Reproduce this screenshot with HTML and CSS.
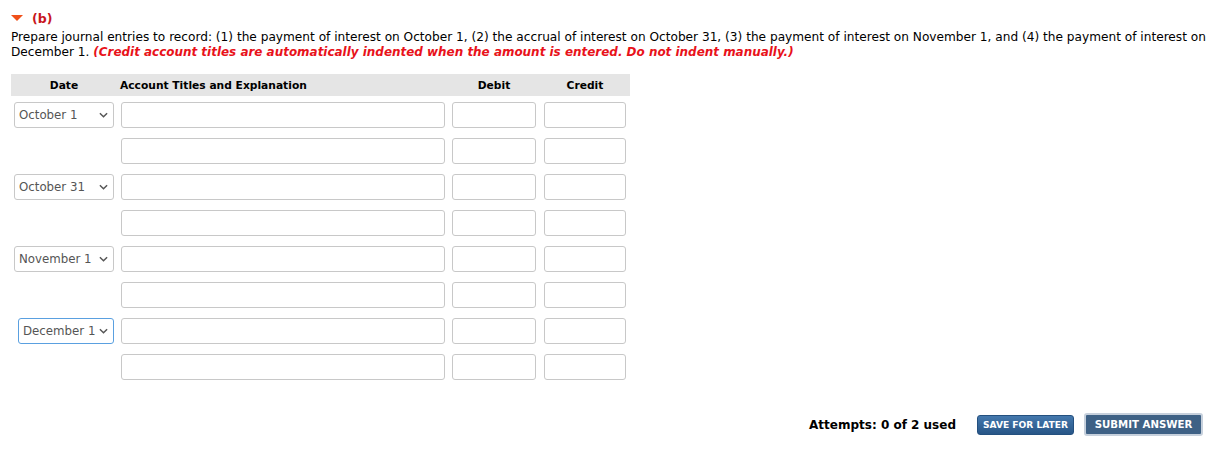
FILE: index.html
```html
<!DOCTYPE html>
<html>
<head>
<meta charset="utf-8">
<link rel="stylesheet" href="styles.css">
</head>
<body>
<div class="page">
  <div class="part">
    <span class="tri"></span>
    <span class="part-label">(b)</span>
  </div>
  <p class="prompt">Prepare journal entries to record: (1) the payment of interest on October 1, (2) the accrual of interest on October 31, (3) the payment of interest on November 1, and (4) the payment of interest on December 1. <em class="note">(Credit account titles are automatically indented when the amount is entered. Do not indent manually.)</em></p>

  <div class="journal">
    <div class="head">
      <div class="h-date">Date</div>
      <div class="h-acct">Account Titles and Explanation</div>
      <div class="h-num">Debit</div>
      <div class="h-num">Credit</div>
    </div>

    <div class="row">
      <div class="c-date"><div class="sel w100"><span>October 1</span><svg class="chev" viewBox="0 0 10 6"><path d="M1 1l4 4 4-4" fill="none" stroke="#555" stroke-width="1.6"/></svg></div></div>
      <div class="c-acct"><div class="inp"></div></div>
      <div class="c-num"><div class="inp"></div></div>
      <div class="c-num"><div class="inp"></div></div>
    </div>
    <div class="row">
      <div class="c-date"></div>
      <div class="c-acct"><div class="inp"></div></div>
      <div class="c-num"><div class="inp"></div></div>
      <div class="c-num"><div class="inp"></div></div>
    </div>

    <div class="row">
      <div class="c-date"><div class="sel w100"><span>October 31</span><svg class="chev" viewBox="0 0 10 6"><path d="M1 1l4 4 4-4" fill="none" stroke="#555" stroke-width="1.6"/></svg></div></div>
      <div class="c-acct"><div class="inp"></div></div>
      <div class="c-num"><div class="inp"></div></div>
      <div class="c-num"><div class="inp"></div></div>
    </div>
    <div class="row">
      <div class="c-date"></div>
      <div class="c-acct"><div class="inp"></div></div>
      <div class="c-num"><div class="inp"></div></div>
      <div class="c-num"><div class="inp"></div></div>
    </div>

    <div class="row">
      <div class="c-date"><div class="sel w100"><span>November 1</span><svg class="chev" viewBox="0 0 10 6"><path d="M1 1l4 4 4-4" fill="none" stroke="#555" stroke-width="1.6"/></svg></div></div>
      <div class="c-acct"><div class="inp"></div></div>
      <div class="c-num"><div class="inp"></div></div>
      <div class="c-num"><div class="inp"></div></div>
    </div>
    <div class="row">
      <div class="c-date"></div>
      <div class="c-acct"><div class="inp"></div></div>
      <div class="c-num"><div class="inp"></div></div>
      <div class="c-num"><div class="inp"></div></div>
    </div>

    <div class="row">
      <div class="c-date"><div class="sel w96 focus"><span>December 1</span><svg class="chev" viewBox="0 0 10 6"><path d="M1 1l4 4 4-4" fill="none" stroke="#555" stroke-width="1.6"/></svg></div></div>
      <div class="c-acct"><div class="inp"></div></div>
      <div class="c-num"><div class="inp"></div></div>
      <div class="c-num"><div class="inp"></div></div>
    </div>
    <div class="row">
      <div class="c-date"></div>
      <div class="c-acct"><div class="inp"></div></div>
      <div class="c-num"><div class="inp"></div></div>
      <div class="c-num"><div class="inp"></div></div>
    </div>
  </div>

  <div class="footer">
    <span class="attempts">Attempts: 0 of 2 used</span>
    <button class="btn save">SAVE FOR LATER</button>
    <button class="btn submit">SUBMIT ANSWER</button>
  </div>
</div>
</body>
</html>
```

FILE: styles.css
```css
html, body {
  margin: 0;
  padding: 0;
  background: #fff;
}
.page {
  font-family: "DejaVu Sans", Verdana, sans-serif;
  font-size: 12.15px;
  color: #000;
  padding: 11px 11px 0 11px;
  width: 1203px;
}
.part {
  display: flex;
  align-items: center;
  gap: 9px;
  height: 14px;
}
.tri {
  width: 0;
  height: 0;
  border-left: 6px solid transparent;
  border-right: 6px solid transparent;
  border-top: 6px solid #f0501a;
}
.part-label {
  font-weight: bold;
  color: #c8161d;
  font-size: 12.5px;
}
.prompt {
  margin: 5px 0 0 0;
  line-height: 15px;
}
.note {
  color: #e8121a;
  font-weight: bold;
  font-style: italic;
  font-size: 0.985em;
}
.journal {
  margin-top: 14px;
  width: 619px;
}
.head {
  display: grid;
  grid-template-columns: 106px 331px 92px 90px;
  background: #e5e5e5;
  height: 22px;
  align-items: center;
  font-weight: bold;
  font-size: 10.7px;
}
.h-date, .h-num {
  text-align: center;
}
.h-acct {
  padding-left: 3px;
}
.row {
  display: grid;
  grid-template-columns: 106px 331px 92px 90px;
  margin-top: 6px;
  height: 26px;
}
.row + .row {
  margin-top: 10px;
}
.c-date {
  display: flex;
  justify-content: flex-end;
  padding-right: 3px;
}
.c-acct {
  padding-left: 4px;
  padding-right: 3px;
}
.c-num {
  padding-left: 4px;
  padding-right: 4px;
}
.inp {
  height: 26px;
  box-sizing: border-box;
  border: 1px solid #c8c8c8;
  border-radius: 3px;
  background: #fff;
}
.sel {
  box-sizing: border-box;
  height: 26px;
  border: 1px solid #c8c8c8;
  border-radius: 3px;
  display: flex;
  align-items: center;
  justify-content: space-between;
  padding: 0 5px 0 4px;
  color: #555;
  font-size: 11.8px;
  white-space: nowrap;
}
.w100 { width: 100px; }
.w96 { width: 96px; }
.sel.focus {
  border-color: #5aa0e0;
}
.chev {
  width: 9px;
  height: 6px;
  flex: none;
}
.footer {
  display: flex;
  align-items: center;
  justify-content: flex-end;
  margin-top: 33px;
  padding-right: 11px;
}
.attempts {
  font-weight: bold;
  font-size: 12px;
  margin-right: 21px;
}
.btn {
  font-family: "DejaVu Sans", Verdana, sans-serif;
  font-weight: bold;
  color: #fff;
  border-radius: 3px;
  cursor: pointer;
}
.save {
  height: 20px;
  width: 97px;
  font-size: 9.1px;
  padding: 0;
  border: 1px solid #24507f;
  background: linear-gradient(#4478ad, #285687);
  margin-right: 10px;
}
.submit {
  height: 23px;
  width: 119px;
  font-size: 10.2px;
  padding: 0;
  border: 2px solid #c6d0dc;
  background: #3e6185;
}
```
